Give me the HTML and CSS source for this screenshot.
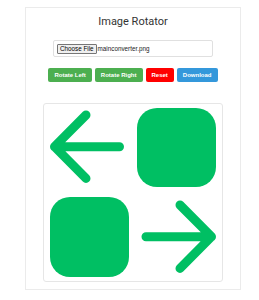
FILE: index.html
```html
<!DOCTYPE html>
<html>
<head>
<meta charset="utf-8">
<link rel="stylesheet" href="styles.css">
</head>
<body>
<div class="card">
  <h1 class="title">Image Rotator</h1>
  <div class="file-box">
    <span class="file-btn">Choose File</span><span class="file-name">mainconverter.png</span>
  </div>
  <div class="actions">
    <button class="btn btn-green">Rotate Left</button>
    <button class="btn btn-green">Rotate Right</button>
    <button class="btn btn-red">Reset</button>
    <button class="btn btn-blue">Download</button>
  </div>
  <div class="preview">
    <svg class="preview-img" viewBox="0 0 178 177" width="178" height="177">
      <rect x="93" y="4" width="79" height="79" rx="20" fill="#00bf63"/>
      <rect x="6" y="93" width="79" height="80" rx="20" fill="#00bf63"/>
      <g fill="none" stroke="#00bf63" stroke-width="9" stroke-linecap="round" stroke-linejoin="round">
        <path d="M75.5 42.7 H10.5 M42 11 L10.5 42.7 L42 74.4"/>
        <path d="M102 132.7 H167.5 M136 101 L167.5 132.7 L136 164.4"/>
      </g>
    </svg>
  </div>
</div>
</body>
</html>
```

FILE: styles.css
```css
html, body {
  margin: 0;
  padding: 0;
  background: #ffffff;
}
body {
  font-family: Roboto, "Liberation Sans", Arial, sans-serif;
}
.card {
  box-sizing: border-box;
  width: 216px;
  height: 283px;
  margin: 7px 0 0 25px;
  border: 1px solid #ebebeb;
  background: #fff;
  padding-top: 7px;
}
.title {
  margin: 0;
  font-size: 11px;
  line-height: 13px;
  font-weight: 400;
  color: #333;
  text-align: center;
}
.file-box {
  box-sizing: border-box;
  width: 160px;
  height: 17px;
  margin: 12px auto 0;
  border: 1px solid #e0e0e0;
  border-radius: 2px;
  display: flex;
  align-items: center;
  padding-left: 3px;
}
.file-btn {
  box-sizing: border-box;
  height: 10px;
  padding: 0 2px;
  border: 1px solid #767676;
  border-radius: 1px;
  background: #efefef;
  font-family: "Liberation Sans", Arial, sans-serif;
  font-size: 6.3px;
  line-height: 8px;
  color: #000;
}
.file-name {
  margin-left: 1px;
  font-family: "Liberation Sans", Arial, sans-serif;
  font-size: 6.3px;
  color: #222;
}
.actions {
  display: flex;
  justify-content: center;
  gap: 3px;
  margin-top: 11px;
}
.btn {
  box-sizing: border-box;
  height: 14px;
  padding: 0 6px;
  border: none;
  border-radius: 2px;
  font-family: "Liberation Sans", Arial, sans-serif;
  font-size: 6px;
  font-weight: 700;
  color: #fff;
  line-height: 14px;
}
.btn-green { background: #4caf50; }
.btn-red { background: #ff0000; }
.btn-blue { background: #3498db; }
.preview {
  box-sizing: border-box;
  width: 180px;
  height: 179px;
  margin: 21px auto 0;
  border: 1px solid #e6e6e6;
  border-radius: 3px;
}
.preview-img {
  display: block;
}
```
